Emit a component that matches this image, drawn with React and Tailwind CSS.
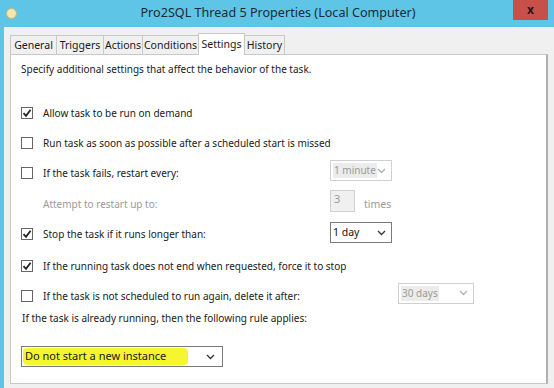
import React from 'react';

const font = { fontFamily: '"Noto Sans", "Open Sans", sans-serif' };

const Check = ({ checked }) => (
  <span className="w-[12px] h-[12px] border border-[#666] bg-white flex items-center justify-center shrink-0">
    {checked && (
      <svg width="10" height="10" viewBox="0 0 10 10">
        <path d="M1.5 5.2 L4 7.8 L8.6 1.8" fill="none" stroke="#222" strokeWidth="1.8" />
      </svg>
    )}
  </span>
);

const Chevron = ({ color }) => (
  <svg width="9" height="6" viewBox="0 0 9 6" className="shrink-0">
    <path d="M1 1 L4.5 4.5 L8 1" fill="none" stroke={color} strokeWidth="1.3" />
  </svg>
);

const Select = ({ value, width, disabled, className = '' }) => (
  <div
    className={`h-[21px] flex items-center justify-between pl-[2px] pr-[5px] border whitespace-nowrap ${disabled ? 'border-[#d0d0d0] text-[#9a9a9a] text-[10px]' : 'border-[#7a7a7a] text-[#111] text-[10.5px]'} bg-white ${className}`}
    style={{ width }}
  >
    <span className={disabled ? 'bg-[#ececec] px-[1px]' : ''}>{value}</span>
    <Chevron color={disabled ? '#b0b0b0' : '#333'} />
  </div>
);

const Row = ({ checked, label, children, className = '' }) => (
  <div className={`flex items-center h-[20px] ${className}`}>
    <div className="flex items-center w-[309px]">
      <Check checked={checked} />
      <span className="ml-[10px] whitespace-nowrap">{label}</span>
    </div>
    {children}
  </div>
);

const tabs = ['General', 'Triggers', 'Actions', 'Conditions', 'Settings', 'History'];
const tabW = [47, 48, 40, 57, 47, 41];

export default function App() {
  return (
    <div className="w-[554px] h-[388px] bg-[#5ec5e7] overflow-hidden relative text-[10px] text-[#1a1a1a]" style={font}>
      <div className="h-[27px] flex items-center relative">
        <div className="absolute left-[6px] top-[8px] w-[11px] h-[11px] rounded-full bg-[#f4e6b0] border border-[#c8b878]" />
        <div className="w-full text-center text-[12.6px] text-[#1c2a34] pl-[2px]">Pro2SQL Thread 5 Properties (Local Computer)</div>
        <div className="absolute right-[6px] top-0 w-[35px] h-[20px] bg-[#c7514a] flex items-center justify-center text-[#1a1a1a] text-[12px] font-bold">
          x
        </div>
      </div>
      <div className="ml-[4px] h-[361px] bg-[#f0f0f0] pl-[6px] pr-[6px] pt-[6px]">
        <div className="flex items-end h-[21px]">
          {tabs.map((t, i) =>
            t === 'Settings' ? (
              <div key={t} className="h-[22px] -mb-px -ml-px bg-white border border-b-0 border-[#c8c8c8] flex items-center justify-center relative z-10 whitespace-nowrap text-[10.5px]" style={{ width: tabW[i] }}>
                {t}
              </div>
            ) : (
              <div key={t} className="h-[19px] border border-b-0 border-[#c8c8c8] -ml-px first:ml-0 flex items-center justify-center bg-[#f0f0f0] whitespace-nowrap pt-[1px] text-[10.5px]" style={{ width: tabW[i] }}>
                {t}
              </div>
            )
          )}
        </div>
        <div className="w-[538px] h-[330px] bg-white border border-[#c8c8c8] border-r-[#b0b0b0] border-r-2 pl-[10px] pt-[7px]">
          <div>Specify additional settings that affect the behavior of the task.</div>
          <div className="mt-[26px] flex flex-col">
            <Row checked label="Allow task to be run on demand" />
            <Row label="Run task as soon as possible after a scheduled start is missed" className="mt-[10px]" />
            <Row label="If the task fails, restart every:" className="mt-[10px]">
              <Select value="1 minute" width={62} disabled className="-mt-[5px]" />
            </Row>
            <div className="flex items-center h-[20px] mt-[11px]">
              <span className="ml-[22px] w-[287px] text-[#9a9a9a]">Attempt to restart up to:</span>
              <div className="w-[25px] h-[22px] border border-[#d0d0d0] bg-[#f0f0f0] text-[#9a9a9a] pl-[3px] -mt-[6px] text-[11px]">3</div>
              <span className="ml-[9px] text-[#9a9a9a] mt-[2px] text-[10.5px]">times</span>
            </div>
            <Row checked label="Stop the task if it runs longer than:" className="mt-[10px]">
              <Select value="1 day" width={62} className="-mt-[3px]" />
            </Row>
            <Row checked label="If the running task does not end when requested, force it to stop" className="mt-[12px]" />
            <Row label="If the task is not scheduled to run again, delete it after:" className="mt-[10px]">
              <Select value="30 days" width={76} disabled className="ml-[68px] -mt-[6px]" />
            </Row>
          </div>
          <div className="mt-[5px] ml-px">If the task is already running, then the following rule applies:</div>
          <div className="mt-[20px] w-[202px] h-[21px] border border-[#7a7a7a] bg-white flex items-center justify-between pr-[7px]">
            <span className="bg-[#f5f530] h-[17px] ml-[1px] pl-[2px] pr-[22px] flex items-center rounded-sm whitespace-nowrap text-[11px]">Do not start a new instance</span>
            <Chevron color="#333" />
          </div>
        </div>
      </div>
    </div>
  );
}
